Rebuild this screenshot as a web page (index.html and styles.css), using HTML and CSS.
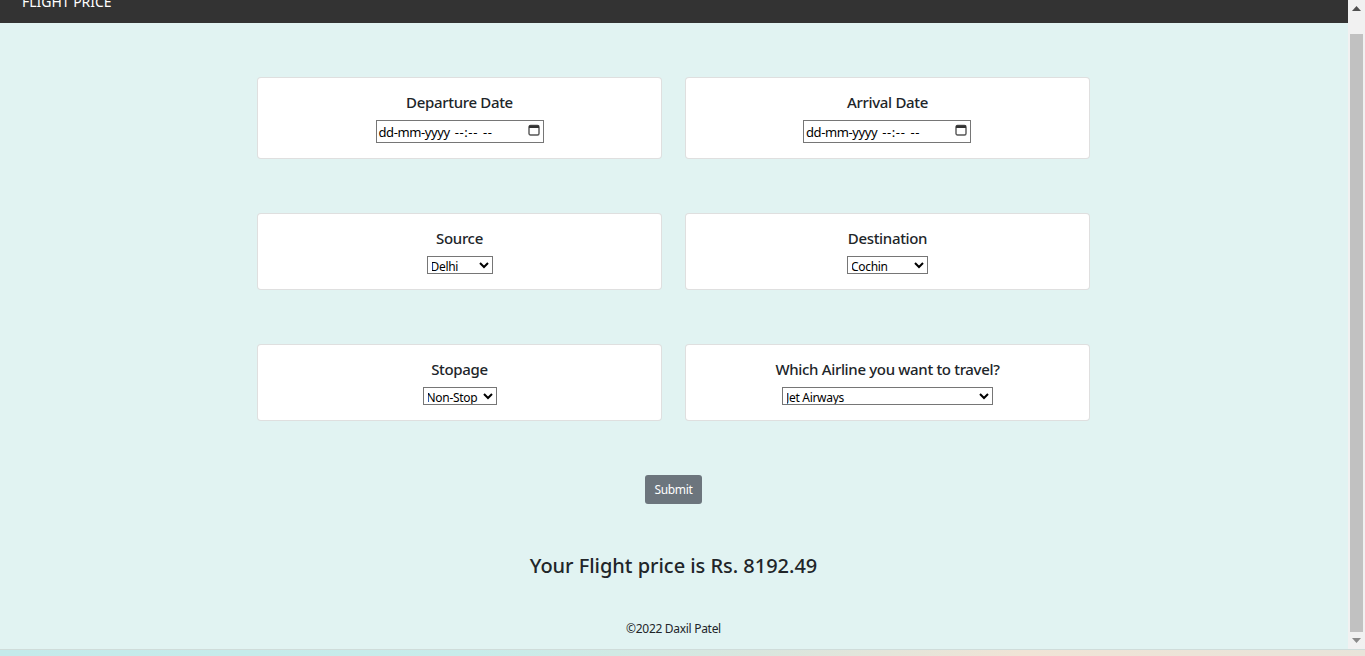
FILE: index.html
```html
<!DOCTYPE html>
<html lang="en">
<head>
<meta charset="utf-8">
<title>Flight Price</title>
<link rel="stylesheet" href="styles.css">
</head>
<body>
<div class="window">
  <div class="page">
    <nav class="navbar"><span class="brand">FLIGHT PRICE</span></nav>
    <main class="content">
      <form class="form-grid">
        <section class="card">
          <h5 class="card-title">Departure Date</h5>
          <div class="date-field">
            <span class="date-part">dd-mm-yyyy</span><span class="time-part">--:-- --</span>
            <svg class="cal" viewBox="0 0 12 12" width="12" height="12"><rect x="1" y="1.500" width="10" height="9.500" rx="1.500" fill="none" stroke="#555" stroke-width="1.400"/><path d="M1 1.500h10v2.500H1z" fill="#333"/></svg>
          </div>
        </section>
        <section class="card">
          <h5 class="card-title">Arrival Date</h5>
          <div class="date-field date-field-right">
            <span class="date-part">dd-mm-yyyy</span><span class="time-part">--:-- --</span>
            <svg class="cal" viewBox="0 0 12 12" width="12" height="12"><rect x="1" y="1.500" width="10" height="9.500" rx="1.500" fill="none" stroke="#555" stroke-width="1.400"/><path d="M1 1.500h10v2.500H1z" fill="#333"/></svg>
          </div>
        </section>
        <section class="card">
          <h5 class="card-title">Source</h5>
          <select class="select w-source" aria-label="Source"><option>Delhi</option><option>Kolkata</option><option>Mumbai</option><option>Chennai</option></select>
        </section>
        <section class="card">
          <h5 class="card-title">Destination</h5>
          <select class="select w-dest" aria-label="Destination"><option>Cochin</option><option>Delhi</option><option>New Delhi</option><option>Hyderabad</option><option>Kolkata</option></select>
        </section>
        <section class="card">
          <h5 class="card-title">Stopage</h5>
          <select class="select w-stop" aria-label="Stopage"><option>Non-Stop</option><option>1</option><option>2</option><option>3</option><option>4</option></select>
        </section>
        <section class="card">
          <h5 class="card-title">Which Airline you want to travel?</h5>
          <select class="select w-air" aria-label="Airline"><option>Jet Airways</option><option>IndiGo</option><option>Air India</option><option>Multiple carriers</option><option>SpiceJet</option><option>Vistara</option><option>GoAir</option></select>
        </section>
      </form>
      <div class="actions"><button class="btn" type="button">Submit</button></div>
      <h3 class="price">Your Flight price is Rs. 8192.49</h3>
      <footer class="footer">©2022 Daxil Patel</footer>
    </main>
  </div>
  <div class="scrollbar" aria-hidden="true">
    <div class="sb-btn"><svg viewBox="0 0 9 6" width="9" height="6"><path d="M4.500 0L9 5H0z" fill="#505050"/></svg></div>
    <div class="sb-track"><div class="sb-thumb"></div></div>
    <div class="sb-btn"><svg viewBox="0 0 9 6" width="9" height="6"><path d="M0 0h9L4.500 5z" fill="#8a8a8a"/></svg></div>
  </div>
</div>
<div class="desktop-strip"></div>
</body>
</html>
```
FILE: styles.css
```css
* { box-sizing: border-box; }
html, body { margin: 0; height: 100%; overflow: hidden; }
body {
  display: flex;
  flex-direction: column;
  height: 656px;
  font-family: "Noto Sans", "Open Sans", sans-serif;
  color: #212529;
  background: #e1f3f2;
}
.window { display: flex; height: 649px; flex: none; }
.page { flex: 1; min-width: 0; display: flex; flex-direction: column; background: #e1f3f2; }
.navbar {
  height: 23px;
  flex: none;
  background: #333;
  overflow: hidden;
  padding-left: 22px;
  display: flex;
  align-items: flex-end;
}
.brand {
  color: #fff;
  font-size: 14px;
  line-height: 20px;
  letter-spacing: -0.03px;
  margin-bottom: 11px;
}
.content { flex: 1; padding: 54px 1px 0 0; display: flex; flex-direction: column; align-items: center; }
.form-grid {
  display: grid;
  grid-template-columns: 405px 405px;
  column-gap: 23px;
  row-gap: 54px;
}
.card {
  background: #fff;
  border: 1px solid rgba(0,0,0,.125);
  border-radius: 4px;
  padding: 12px 16px 15px;
  display: flex;
  flex-direction: column;
  align-items: center;
}
.card-title {
  margin: 0 0 6px;
  font-size: 15px;
  line-height: 24px;
  font-weight: 500;
  letter-spacing: -0.33px;
}
.date-field {
  width: 168px;
  height: 23px;
  border: 1px solid #767676;
  display: flex;
  align-items: center;
  padding: 0 2px;
  background: #fff;
  font-size: 13px;
  color: #000;
  white-space: nowrap;
}
.date-field-right { margin-right: 1px; }
.date-part { letter-spacing: -0.4px; }
.time-part { letter-spacing: 0.6px; margin-left: 5px; word-spacing: 1px; }
.cal { flex: none; margin-left: auto; margin-right: 1px; margin-top: -3px; }
.select {
  height: 18px;
  border: 1px solid #767676;
  border-radius: 0;
  background-color: #fff;
  font: 12px "Noto Sans", sans-serif;
  letter-spacing: -0.3px;
  text-indent: -1px;
  color: #000;
  padding: 0;
}
.w-source { width: 66px; }
.w-dest { width: 81px; }
.w-stop { width: 74px; }
.w-air { width: 211px; }
.actions { margin-top: 54px; }
.btn {
  display: block;
  width: 57px;
  height: 29px;
  border: 0;
  border-radius: 3px;
  background: #6c757d;
  color: #fff;
  font: 12px "Noto Sans", sans-serif;
  letter-spacing: -0.3px;
  padding: 0;
}
.price {
  margin: 48px 0 0;
  font-size: 20px;
  line-height: 28px;
  font-weight: 500;
  letter-spacing: -0.03px;
}
.footer {
  margin-top: 40px;
  font-size: 12px;
  line-height: 18px;
  letter-spacing: -0.3px;
}
.scrollbar { width: 17px; flex: none; background: #f1f1f1; display: flex; flex-direction: column; }
.sb-btn { height: 17px; flex: none; display: flex; align-items: center; justify-content: center; }
.sb-track { flex: 1; padding: 17px 2px 0; display: flex; }
.sb-thumb { flex: 1; height: 598px; background: #c1c1c1; }
.desktop-strip {
  flex: 1;
  background: linear-gradient(90deg, #c4eaea 0%, #c8ecea 35%, #d8e6de 55%, #f0e4d6 75%, #e8e4da 100%);
  border-top: 1px solid #cfdcda;
}
```
